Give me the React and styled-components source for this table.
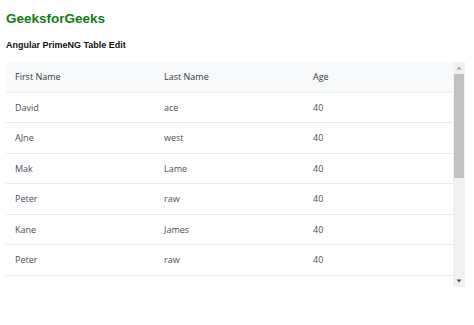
import React from 'react';
import styled, { createGlobalStyle } from 'styled-components';

const GlobalStyle = createGlobalStyle`
  html, body {
    margin: 0;
    padding: 0;
    background: #fff;
  }
`;

const people = [
  { first: 'David', last: 'ace', age: 40 },
  { first: 'AJne', last: 'west', age: 40 },
  { first: 'Mak', last: 'Lame', age: 40 },
  { first: 'Peter', last: 'raw', age: 40 },
  { first: 'Kane', last: 'James', age: 40 },
  { first: 'Peter', last: 'raw', age: 40 }
];

const Arrow = ({ dir, color }) => (
  <svg width="12" height="12" viewBox="0 0 12 12">
    <path
      d={dir === 'up' ? 'M3.5 7.5 L6 4.5 L8.5 7.5 Z' : 'M3.5 4.5 L8.5 4.5 L6 7.5 Z'}
      fill={color}
    />
  </svg>
);

const App = () => (
  <Page>
    <GlobalStyle />
    <Title>GeeksforGeeks</Title>
    <Subtitle>Angular PrimeNG Table Edit</Subtitle>
    <TableWrap>
      <Viewport>
        <Table>
          <thead>
            <tr>
              <HeadCell>First Name</HeadCell>
              <HeadCell>Last Name</HeadCell>
              <HeadCell>Age</HeadCell>
            </tr>
          </thead>
          <tbody>
            {people.map((p, i) => (
              <tr key={i}>
                <Cell>{p.first}</Cell>
                <Cell>{p.last}</Cell>
                <Cell>{p.age}</Cell>
              </tr>
            ))}
          </tbody>
        </Table>
      </Viewport>
      <Scrollbar>
        <ScrollButton>
          <Arrow dir="up" color="#a3a3a3" />
        </ScrollButton>
        <Track>
          <Thumb />
        </Track>
        <ScrollButton>
          <Arrow dir="down" color="#505050" />
        </ScrollButton>
      </Scrollbar>
    </TableWrap>
  </Page>
);

export default App;

const Page = styled.div`
  padding: 10px 9px 0 6px;
  width: 459px;
`;

const Title = styled.h1`
  margin: 0;
  font-family: 'Liberation Sans', Arial, sans-serif;
  font-size: 13.5px;
  line-height: 18px;
  font-weight: bold;
  color: #107c12;
`;

const Subtitle = styled.h3`
  margin: 11px 0 0;
  font-family: 'Liberation Sans', Arial, sans-serif;
  font-size: 9px;
  line-height: 12px;
  font-weight: bold;
  color: #111;
`;

const TableWrap = styled.div`
  display: flex;
  margin-top: 11px;
  height: 225px;
`;

const Viewport = styled.div`
  flex: 1;
  overflow: hidden;
`;

const Scrollbar = styled.div`
  display: flex;
  flex-direction: column;
  width: 12px;
  background: #f1f1f1;
`;

const ScrollButton = styled.div`
  display: flex;
  align-items: center;
  justify-content: center;
  height: 12px;
`;

const Track = styled.div`
  flex: 1;
  padding: 0 1px;
`;

const Thumb = styled.div`
  height: 104px;
  background: #c1c1c1;
`;

const Table = styled.table`
  width: 100%;
  border-collapse: collapse;
  table-layout: fixed;
  font-family: 'Open Sans', 'Noto Sans', sans-serif;
  font-size: 9px;
  color: #495057;
`;

const HeadCell = styled.th`
  height: 30px;
  padding: 0 9px;
  box-sizing: border-box;
  text-align: left;
  font-weight: 500;
  color: #343a40;
  background: #f8f9fa;
  border-bottom: 1px solid #eef0f2;
`;

const Cell = styled.td`
  height: 30.5px;
  padding: 0 9px;
  box-sizing: border-box;
  border-bottom: 1px solid #e9ecef;
`;
